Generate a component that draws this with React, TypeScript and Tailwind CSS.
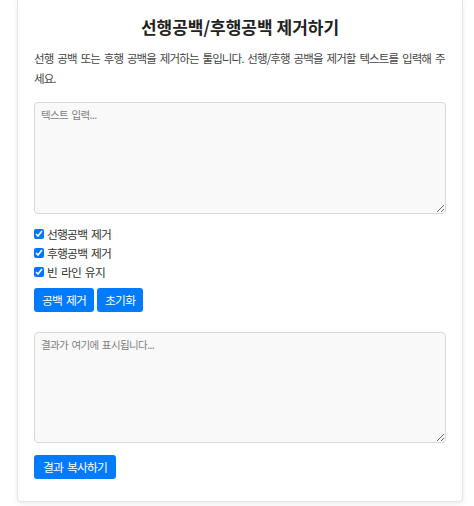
import { useState } from "react";

const OPTIONS = ["선행공백 제거", "후행공백 제거", "빈 라인 유지"];

export default function App() {
  const [input, setInput] = useState("");
  const [output, setOutput] = useState("");
  const [checked, setChecked] = useState([true, true, true]);

  const trim = () => {
    let lines = input.split("\n").map((l) => {
      let s = l;
      if (checked[0]) s = s.replace(/^\s+/, "");
      if (checked[1]) s = s.replace(/\s+$/, "");
      return s;
    });
    if (!checked[2]) lines = lines.filter((l) => l.trim() !== "");
    setOutput(lines.join("\n"));
  };

  return (
    <div
      className="min-h-screen bg-white pl-[17px] pr-[11px] text-[#333]"
      style={{ fontFamily: '"Noto Sans CJK KR", "Noto Sans", sans-serif' }}
    >
      <div className="rounded-b-[4px] border border-t-0 border-[#e6e6e6] bg-white px-[16px] pb-[22px] pt-[14px] shadow-[0_2px_4px_rgba(0,0,0,0.08)]">
        <h1 className="text-center text-[17px] font-bold leading-[26px] text-[#222]">
          선행공백/후행공백 제거하기
        </h1>
        <p className="mt-[8px] text-[11.5px] leading-[20px] tracking-[-0.9px] text-[#444] [word-spacing:2.2px]">
          선행 공백 또는 후행 공백을 제거하는 툴입니다. 선행/후행 공백을 제거할 텍스트를 입력해 주세요.
        </p>

        <textarea
          value={input}
          onChange={(e) => setInput(e.target.value)}
          placeholder="텍스트 입력..."
          className="mt-[14px] block h-[112px] w-full rounded-[4px] border border-[#d9d9d9] bg-[#f9f9f9] px-[6px] py-[4px] text-[10.5px] leading-[16px] tracking-[-0.6px] placeholder:text-[#808080] [word-spacing:1.5px]"
        />

        <div className="mt-[12px] flex flex-col gap-[2.5px]">
          {OPTIONS.map((label, i) => (
            <label key={label} className="flex h-[16.5px] items-center gap-[3px] text-[11.8px] tracking-[-0.8px] text-[#333] [word-spacing:2px]">
              <input
                type="checkbox"
                checked={checked[i]}
                onChange={() => setChecked(checked.map((c, j) => (j === i ? !c : c)))}
                className="m-0 h-[10px] w-[10px] accent-[#0075ff]"
              />
              {label}
            </label>
          ))}
        </div>

        <div className="mt-[7px] flex gap-[3px]">
          <button
            onClick={trim}
            className="h-[24px] rounded-[3px] bg-[#007bff] px-[8px] text-[11.8px] tracking-[-0.8px] text-white [word-spacing:2px]"
          >
            공백 제거
          </button>
          <button
            onClick={() => {
              setInput("");
              setOutput("");
            }}
            className="h-[24px] rounded-[3px] bg-[#007bff] px-[8px] text-[11.8px] tracking-[-0.8px] text-white"
          >
            초기화
          </button>
        </div>

        <textarea
          value={output}
          readOnly
          placeholder="결과가 여기에 표시됩니다..."
          className="mt-[20px] block h-[111px] w-full rounded-[4px] border border-[#d9d9d9] bg-[#f9f9f9] px-[6px] py-[4px] text-[10.5px] leading-[16px] tracking-[-0.6px] placeholder:text-[#808080] [word-spacing:1.5px]"
        />

        <button
          onClick={() => navigator.clipboard?.writeText(output)}
          className="mt-[12px] h-[24px] rounded-[3px] bg-[#007bff] px-[9px] text-[11.8px] tracking-[-0.8px] text-white [word-spacing:2px]"
        >
          결과 복사하기
        </button>
      </div>
    </div>
  );
}
